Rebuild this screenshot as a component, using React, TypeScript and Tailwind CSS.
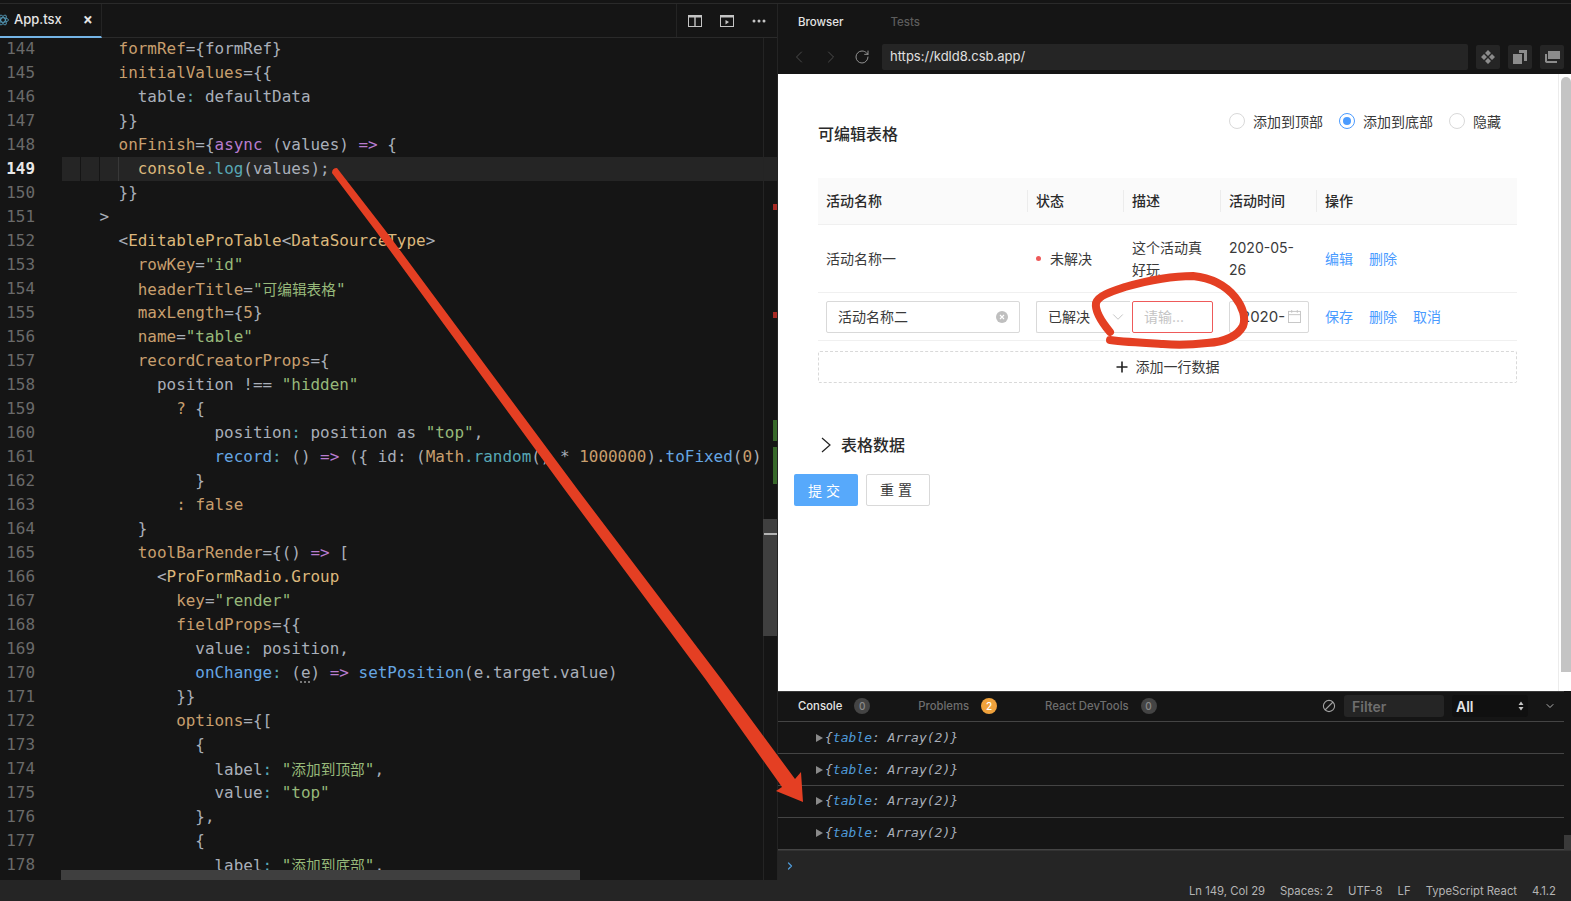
import React from "react";
import { ChevronDown, ChevronLeft, ChevronRight, RotateCw } from "lucide-react";

const UI = "font-['Inter','Noto_Sans_CJK_SC',sans-serif]";
const CN = "font-['Inter','Noto_Sans_CJK_SC',sans-serif]";

// token colours
const P = "text-[#a9afb9]";
const A = "text-[#c89f6e]";
const K = "text-[#b87ccf]";
const B = "text-[#66a6e2]";
const T = "text-[#58a8b5]";
const G = "text-[#97b97a]";
const Y = "text-[#dcb87c]";
const ZG = "text-[#97b97a] text-[14.7px] font-['Noto_Sans_CJK_SC',monospace]";
const D = "text-[#a9afb9] underline decoration-dotted decoration-[#999] underline-offset-4";

type Tok = [string, string];

const codeLines: { n: number; t: Tok[] }[] = [
  { n: 144, t: [["      formRef", A], ["={formRef}", P]] },
  { n: 145, t: [["      initialValues", A], ["={{", P]] },
  { n: 146, t: [["        table", P], [": ", T], ["defaultData", P]] },
  { n: 147, t: [["      }}", P]] },
  { n: 148, t: [["      onFinish", A], ["={", P], ["async", K], [" (values) ", P], ["=>", K], [" {", P]] },
  { n: 149, t: [["        console", Y], [".", T], ["log", T], ["(values);", P]] },
  { n: 150, t: [["      }}", P]] },
  { n: 151, t: [["    >", P]] },
  { n: 152, t: [["      <", P], ["EditableProTable", Y], ["<", P], ["DataSourceType", Y], [">", P]] },
  { n: 153, t: [["        rowKey", A], ["=", P], ['"id"', G]] },
  { n: 154, t: [["        headerTitle", A], ["=", P], ['"', G], ["可编辑表格", ZG], ['"', G]] },
  { n: 155, t: [["        maxLength", A], ["={", P], ["5", A], ["}", P]] },
  { n: 156, t: [["        name", A], ["=", P], ['"table"', G]] },
  { n: 157, t: [["        recordCreatorProps", A], ["={", P]] },
  { n: 158, t: [["          position !== ", P], ['"hidden"', G]] },
  { n: 159, t: [["            ", P], ["?", A], [" {", P]] },
  { n: 160, t: [["                position", P], [": ", T], ["position as ", P], ['"top"', G], [",", P]] },
  { n: 161, t: [["                record", B], [": ", T], ["() ", P], ["=>", K], [" ({ id: (", P], ["Math", A], [".", T], ["random", T], ["() * ", P], ["1000000", A], [").", P], ["toFixed", B], ["(", P], ["0", A], [")", P]] },
  { n: 162, t: [["              }", P]] },
  { n: 163, t: [["            ", P], [":", A], [" ", P], ["false", A]] },
  { n: 164, t: [["        }", P]] },
  { n: 165, t: [["        toolBarRender", A], ["={() ", P], ["=>", K], [" [", P]] },
  { n: 166, t: [["          <", P], ["ProFormRadio.Group", Y]] },
  { n: 167, t: [["            key", A], ["=", P], ['"render"', G]] },
  { n: 168, t: [["            fieldProps", A], ["={{", P]] },
  { n: 169, t: [["              value", P], [": ", T], ["position,", P]] },
  { n: 170, t: [["              onChange", B], [": ", T], ["(", P], ["e", D], [") ", P], ["=>", K], [" ", P], ["setPosition", B], ["(e.target.value)", P]] },
  { n: 171, t: [["            }}", P]] },
  { n: 172, t: [["            options", A], ["={[", P]] },
  { n: 173, t: [["              {", P]] },
  { n: 174, t: [["                label", P], [": ", T], ['"', G], ["添加到顶部", ZG], ['"', G], [",", P]] },
  { n: 175, t: [["                value", P], [": ", T], ['"top"', G]] },
  { n: 176, t: [["              },", P]] },
  { n: 177, t: [["              {", P]] },
  { n: 178, t: [["                label", P], [": ", T], ['"', G], ["添加到底部", ZG], ['"', G], [",", P]] },
];

function Radio({ label, checked }: { label: string; checked?: boolean }) {
  return (
    <div className="flex items-center gap-2">
      <span
        className={
          checked
            ? "w-4 h-4 rounded-full border border-[#4a9bff] flex items-center justify-center"
            : "w-4 h-4 rounded-full border border-[#d9d9d9]"
        }
      >
        {checked && <span className="w-2 h-2 rounded-full bg-[#4a9bff]" />}
      </span>
      <span className="text-[14px] text-[#3a3a3a]">{label}</span>
    </div>
  );
}

function Badge({ value, orange }: { value: string; orange?: boolean }) {
  return (
    <span
      className={
        orange
          ? "w-4 h-4 rounded-full bg-[#f0a23c] text-white text-[10px] flex items-center justify-center"
          : "w-4 h-4 rounded-full bg-[#444444] text-[#8a8a8a] text-[10px] flex items-center justify-center"
      }
    >
      {value}
    </span>
  );
}

function ConsoleRow({ up }: { up?: boolean }) {
  return (
    <div
      className={
        up
          ? "h-[32px] pb-[2px] border-b border-[#444444] flex items-center pl-[38px] font-['DejaVu_Sans_Mono',monospace] text-[13px] italic text-[#a9afb9]"
          : "h-[32px] border-b border-[#444444] flex items-center pl-[38px] font-['DejaVu_Sans_Mono',monospace] text-[13px] italic text-[#a9afb9]"
      }
    >
      <span className="w-0 h-0 border-y-[4px] border-y-transparent border-l-[7px] border-l-[#8a8a8a] mr-[2px]" />
      <span>{"{"}</span>
      <span className="text-[#4f9ad8]">table</span>
      <span>: Array(2){"}"}</span>
    </div>
  );
}

function Editor() {
  return (
    <div className="w-[778px] shrink-0 flex flex-col border-r border-[#242424] bg-[#151515] relative overflow-hidden">
      <div className="h-[34px] shrink-0 flex border-b border-[#2a2a2a]">
        <div className="w-[102px] border-r border-[#242424] border-b-2 border-b-[#74b4e6] -mb-px flex items-center relative">
          <svg className="absolute left-[-3px] top-[10px]" width="12" height="12" viewBox="0 0 24 24" fill="none" stroke="#5aa7c9" strokeWidth="1.6">
            <ellipse cx="12" cy="12" rx="11" ry="4.4" />
            <ellipse cx="12" cy="12" rx="11" ry="4.4" transform="rotate(60 12 12)" />
            <ellipse cx="12" cy="12" rx="11" ry="4.4" transform="rotate(120 12 12)" />
          </svg>
          <span className={`${UI} ml-[14px] text-[13px] font-medium text-[#e6e6e6]`}>App.tsx</span>
          <span className="absolute left-[83px] top-[5px] text-[#e6e6e6] text-[17px] font-bold leading-[22px]">×</span>
        </div>
        <div className="flex-1" />
        <div className="w-[101px] border-l border-[#242424] flex items-center pl-[11px] gap-[18px]">
          <svg width="14" height="12" viewBox="0 0 14 12" fill="none" stroke="#c4c4c4">
            <rect x="0.5" y="0.5" width="13" height="11" />
            <rect x="0" y="0" width="14" height="2.5" fill="#c4c4c4" stroke="none" />
            <path d="M7 1v10" strokeWidth="1.4" />
          </svg>
          <svg width="14" height="12" viewBox="0 0 14 12" fill="none" stroke="#c4c4c4">
            <rect x="0.5" y="0.5" width="13" height="11" />
            <rect x="0" y="0" width="14" height="2.5" fill="#c4c4c4" stroke="none" />
            <path d="M5.5 5v4.5L9 7z" fill="#c4c4c4" stroke="none" />
          </svg>
          <svg width="14" height="4" viewBox="0 0 14 4" fill="#c4c4c4">
            <circle cx="2" cy="2" r="1.5" />
            <circle cx="7" cy="2" r="1.5" />
            <circle cx="12" cy="2" r="1.5" />
          </svg>
        </div>
      </div>

      <div className="flex-1 overflow-hidden -mt-px font-['DejaVu_Sans_Mono',monospace] text-[15.95px] leading-[24px]">
        {codeLines.map((line) => (
          <div key={line.n} className="h-[24px] flex whitespace-pre relative">
            <span className={line.n === 149 ? "w-[35px] text-right text-[#e8e8e8] font-bold" : "w-[35px] text-right text-[#6a6a6a]"}>
              {line.n}
            </span>
            {line.n === 149 && (
              <div className="absolute left-[62px] right-0 inset-y-0 bg-[#252525] flex">
                <span className="w-[19px] border-r border-[#151515]" />
                <span className="w-[19px] border-r border-[#151515]" />
                <span className="w-[19px] border-r border-[#383838]" />
              </div>
            )}
            <span className="ml-[26px] relative">
              {line.t.map((tok, i) => (
                <span key={i} className={tok[1]}>
                  {tok[0]}
                </span>
              ))}
            </span>
          </div>
        ))}
      </div>

      {/* overview ruler */}
      <div className="absolute right-0 top-[34px] bottom-0 w-[14px] border-l border-[#242424]">
        <div className="absolute right-0 top-[166px] w-[4px] h-[6px] bg-[#a82a24]" />
        <div className="absolute right-0 top-[274px] w-[4px] h-[6px] bg-[#a82a24]" />
        <div className="absolute right-0 top-[382px] w-[4px] h-[21px] bg-[#38692a]" />
        <div className="absolute right-0 top-[409px] w-[4px] h-[37px] bg-[#38692a]" />
        <div className="absolute right-0 top-[481px] w-[14px] h-[117px] bg-[#3f3f3f]" />
        <div className="absolute right-0 top-[495px] w-[13px] h-[2px] bg-[#b4b4b4]" />
      </div>
      {/* horizontal scrollbar */}
      <div className="absolute left-[61px] bottom-0 w-[519px] h-[10px] bg-[#3f3f3f]" />
    </div>
  );
}

function BrowserPane() {
  return (
    <div className="flex-1 min-w-0 flex flex-col">
      <div className="h-[70px] shrink-0 bg-[#151515]">
        <div className={`${UI} h-[37px] flex items-center pl-[20px] gap-[47px] text-[11.5px] font-medium`}>
          <span className="text-[#e4e4e4]">Browser</span>
          <span className="text-[#5c5c5c]">Tests</span>
        </div>
        <div className="h-[26px] mt-[3px] flex items-center pl-[11px]">
          <ChevronLeft size={20} strokeWidth={1} className="text-[#555555]" />
          <ChevronRight size={20} strokeWidth={1} className="text-[#555555] ml-[12px]" />
          <RotateCw size={16} strokeWidth={1.4} className="text-[#9a9a9a] ml-[13px]" />
          <div className={`${UI} w-[586px] h-[26px] ml-[12px] rounded-[2px] bg-[#252525] flex items-center pl-[8px] text-[13px] text-[#e0e0e0]`}>
            https://kdld8.csb.app/
          </div>
          <div className="ml-[8px] w-[24px] h-[24px] rounded-[2px] bg-[#252525] flex items-center justify-center">
            <svg width="16" height="16" viewBox="0 0 16 16" fill="#8c8c8c">
              <path d="M8 1l3 3-3 3-3-3zM4 5l3 3-3 3-3-3zM12 5l3 3-3 3-3-3zM8 9l3 3-3 3-3-3z" />
            </svg>
          </div>
          <div className="ml-[8px] w-[24px] h-[24px] rounded-[2px] bg-[#252525] flex items-center justify-center">
            <svg width="16" height="16" viewBox="0 0 16 16" fill="#8c8c8c">
              <path d="M7 1h8v11h-3V4H7z" />
              <path d="M1 5h9v10H1z" />
            </svg>
          </div>
          <div className="ml-[8px] w-[24px] h-[24px] rounded-[2px] bg-[#252525] flex items-center justify-center">
            <svg width="16" height="16" viewBox="0 0 16 16" fill="#8c8c8c">
              <path d="M4 2h12v8H4z" />
              <path d="M1 5h2v7h10v2H2.5L1 13z" />
            </svg>
          </div>
        </div>
      </div>

      {/* preview page */}
      <div className={`${CN} h-[617px] shrink-0 bg-white flex text-[#3a3a3a]`}>
        <div className="w-[780px] shrink-0 pl-[40px]">
          <div className="flex justify-between w-[683px]">
            <div className="pt-[48px] text-[16px] font-medium leading-[24px] text-[#2a2a2a]">可编辑表格</div>
            <div className="pt-[36px] flex gap-4 h-[58px]">
              <Radio label="添加到顶部" />
              <Radio label="添加到底部" checked />
              <Radio label="隐藏" />
            </div>
          </div>

          <div className="mt-[32px] w-[699px] text-[14px]">
            <div className="h-[47px] pb-[2px] grid grid-cols-[210px_96px_97px_96px_200px] bg-[#fafafa] border-b border-[#f0f0f0] font-medium text-[#2a2a2a]">
              {["活动名称", "状态", "描述", "活动时间", "操作"].map((h, i) => (
                <div key={h} className="flex items-center pl-[8px] relative">
                  {h}
                  {i < 4 && <span className="absolute right-0 top-[12px] h-[22px] w-px bg-[#ececec]" />}
                </div>
              ))}
            </div>

            <div className="h-[68px] grid grid-cols-[210px_96px_97px_96px_200px] border-b border-[#f0f0f0] items-center leading-[22px]">
              <div className="pl-[8px]">活动名称一</div>
              <div className="pl-[8px] flex items-center">
                <span className="w-[5px] h-[5px] rounded-full bg-[#ee5a5a] mr-[9px]" />
                未解决
              </div>
              <div className="px-[8px]">这个活动真好玩</div>
              <div className="pl-[8px]">
                2020-05-
                <br />
                26
              </div>
              <div className="pl-[8px] flex gap-4 text-[#4a9bff]">
                <span>编辑</span>
                <span>删除</span>
              </div>
            </div>

            <div className="h-[48px] grid grid-cols-[210px_96px_97px_96px_200px] border-b border-[#f0f0f0] items-center">
              <div className="pl-[8px]">
                <div className="w-[194px] h-[32px] border border-[#d9d9d9] rounded-[2px] flex items-center justify-between pl-[11px] pr-[11px]">
                  活动名称二
                  <svg width="12" height="12" viewBox="0 0 12 12">
                    <circle cx="6" cy="6" r="6" fill="#bfbfbf" />
                    <path d="M4 4l4 4M8 4l-4 4" stroke="#fff" strokeWidth="1.1" />
                  </svg>
                </div>
              </div>
              <div className="pl-[8px]">
                <div className="w-[94px] h-[32px] border-y border-l border-[#d9d9d9] rounded-l-[2px] flex items-center pl-[11px]">
                  已解决
                  <ChevronDown size={18} strokeWidth={1} className="ml-[19px] text-[#b0b0b0]" />
                </div>
              </div>
              <div className="pl-[8px]">
                <div className="w-[81px] h-[32px] border border-[#ee5a5a] rounded-[2px] flex items-center pl-[11px] text-[#c4c4c4]">
                  请输...
                </div>
              </div>
              <div className="pl-[8px]">
                <div className="w-[80px] h-[32px] border border-[#d9d9d9] rounded-[2px] flex items-center pl-[11px] pt-[1px] gap-[3px] overflow-hidden">
                  <span className="whitespace-nowrap text-[15px] leading-[20px]">2020-</span>
                  <svg className="shrink-0 -mt-[1px]" width="13" height="13" viewBox="0 0 14 14" fill="none" stroke="#c4c4c4">
                    <rect x="0.5" y="1.5" width="13" height="12" />
                    <path d="M0.5 5h13M4 0v3M10 0v3" />
                  </svg>
                </div>
              </div>
              <div className="pl-[8px] flex gap-4 text-[#4a9bff]">
                <span>保存</span>
                <span>删除</span>
                <span>取消</span>
              </div>
            </div>

            <div className="mt-[10px] h-[32px] border border-dashed border-[#d9d9d9] rounded-[2px] flex items-center justify-center pb-[1px]">
              <svg className="mr-[8px]" width="12" height="12" viewBox="0 0 12 12" stroke="#222" strokeWidth="1.6">
                <path d="M6 0.5v11M0.5 6h11" />
              </svg>
              添加一行数据
            </div>
          </div>

          <div className="mt-[50px] h-[24px] flex items-center text-[16px] font-medium text-[#2a2a2a]">
            <svg className="ml-[3px] mr-[9px]" width="11" height="16" viewBox="0 0 11 16" fill="none" stroke="#222" strokeWidth="1.2">
              <path d="M1 1l8 7-8 7" />
            </svg>
            表格数据
          </div>

          <div className="mt-[17px] -ml-[24px] flex gap-2 text-[14px]">
            <div className="w-[64px] h-[32px] bg-[#57a9fb] rounded-[2px] text-white flex items-center justify-center tracking-[4px]">提交</div>
            <div className="w-[64px] h-[32px] border border-[#d9d9d9] rounded-[2px] flex items-center justify-center tracking-[4px] pb-[1px]">重置</div>
          </div>
        </div>
        <div className="flex-1 border-l border-[#ececec] pl-[2px] pt-[3px]">
          <div className="w-[10px] h-[595px] bg-[#c4c4c4] rounded-t-[5px]" />
        </div>
      </div>

      {/* console */}
      <div className="flex-1 flex flex-col bg-[#151515]">
        <div className="flex-1 relative">
          <div className="mr-[7px]">
            <div className={`${UI} h-[31px] border-t border-[#3a3a3a] border-b border-b-[#444444] flex items-center pb-[1px] text-[11.3px] font-medium`}>
              <span className="ml-[20px] text-[#e4e4e4]">Console</span>
              <span className="ml-[12px]"><Badge value="0" /></span>
              <span className="ml-[48px] text-[#6e6e6e]">Problems</span>
              <span className="ml-[12px]"><Badge value="2" orange /></span>
              <span className="ml-[48px] text-[#6e6e6e]">React DevTools</span>
              <span className="ml-[12px]"><Badge value="0" /></span>
              <div className="ml-auto flex items-center">
                <svg width="14" height="14" viewBox="0 0 14 14" fill="none" stroke="#a0a0a0" strokeWidth="1.1">
                  <circle cx="7" cy="7" r="5.6" />
                  <path d="M3 11L11 3" />
                </svg>
                <div className="ml-[8px] w-[100px] h-[22px] rounded-[3px] bg-[#252525] flex items-center pl-[8px] text-[14px] font-semibold text-[#6e6e6e]">
                  Filter
                </div>
                <div className="ml-[8px] w-[76px] h-[22px] rounded-[3px] bg-[#101010] flex items-center justify-between px-[4px] text-[14px] font-semibold text-[#e4e4e4]">
                  All
                  <svg width="6" height="10" viewBox="0 0 6 10" fill="#c4c4c4">
                    <path d="M3 0.5L5.5 4h-5zM3 9.5L0.5 6h5z" />
                  </svg>
                </div>
                <ChevronDown size={12} strokeWidth={2} className="ml-[16px] mr-[8px] text-[#b0b0b0]" />
              </div>
            </div>
            <ConsoleRow />
            <ConsoleRow />
            <ConsoleRow up />
            <ConsoleRow up />
          </div>
          <div className="absolute right-0 bottom-0 w-[7px] h-[15px] bg-[#3a3a3a]" />
        </div>
        <div className="h-[30px] shrink-0 bg-[#252525] border-t border-[#333333] pl-[6px] flex items-center text-[#4f9ad8]">
          <ChevronRight size={12} strokeWidth={2.5} />
        </div>
      </div>
    </div>
  );
}

export default function App() {
  return (
    <div className="w-[1571px] h-[901px] overflow-hidden relative flex flex-col bg-[#151515]">
      <div className="h-[4px] shrink-0 border-b border-[#2a2a2a]" />
      <div className="h-[876px] shrink-0 flex">
        <Editor />
        <BrowserPane />
      </div>
      <div className={`${UI} flex-1 bg-[#252525] flex items-center justify-end gap-[15px] pr-[15px] pt-[1px] text-[11.3px] text-[#b4b4b4]`}>
        <span>Ln 149, Col 29</span>
        <span>Spaces: 2</span>
        <span>UTF-8</span>
        <span>LF</span>
        <span>TypeScript React</span>
        <span>4.1.2</span>
      </div>

      {/* hand drawn annotation on top of the screenshot */}
      <svg className="absolute inset-0 pointer-events-none" width="1571" height="901" viewBox="0 0 1571 901">
        <path
          d="M332 173Q332 168 337 168L385 230L578 490L722 680L795 779L801 772L803 802L776 791L782 787L706 680L565 490L375 230Z"
          fill="#e43f23"
        />
        <path
          d="M1110 332C1100 320 1095 310 1096 303C1098 296 1110 292 1125 287C1150 280 1170 276 1193 276C1212 278 1226 286 1235 297C1243 307 1246 318 1243 326C1237 337 1224 342 1207 343C1190 345 1175 345 1163 344C1145 343 1125 342 1110 340"
          fill="none"
          stroke="#e43f23"
          strokeWidth="8"
          strokeLinecap="round"
        />
      </svg>
    </div>
  );
}
